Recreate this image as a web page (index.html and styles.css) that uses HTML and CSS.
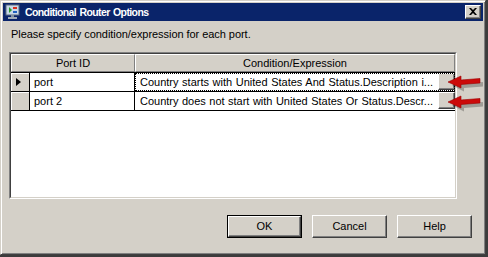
FILE: index.html
```html
<!DOCTYPE html>
<html>
<head>
<meta charset="utf-8">
<link rel="stylesheet" href="styles.css">
</head>
<body>
<div class="window">
  <div class="titlebar">
    <svg class="app-icon" width="16" height="16" viewBox="0 0 16 16">
      <rect x="1" y="1" width="13" height="10" fill="#c8d8e8" stroke="#5a6a80" stroke-width="1"/>
      <rect x="6" y="11" width="3" height="2" fill="#8090a0"/>
      <rect x="3" y="13" width="9" height="2" fill="#a0aab8"/>
      <path d="M4 3 L7 6 L4 9 Z" fill="#2a9a2a"/>
      <path d="M8 3 h4 v2 h-4 z" fill="#d83020"/>
      <path d="M8 7 h4 v2 h-4 z" fill="#2060c0"/>
    </svg>
    <span class="title-text">Conditional Router Options</span>
    <span class="close-btn">
      <svg width="8" height="7" viewBox="0 0 8 7"><path d="M0 0h2l2 2 2-2h2L5 3.5 8 7H6L4 5 2 7H0l3-3.5z" fill="#000"/></svg>
    </span>
  </div>
  <div class="content">
    <div class="prompt">Please specify condition/expression for each port.</div>
    <div class="grid">
      <div class="grid-inner">
        <div class="hrow">
          <div class="hcell hcell-id">Port ID</div>
          <div class="hcell hcell-cond">Condition/Expression</div>
        </div>
        <div class="row">
          <div class="indicator"><span class="tri"></span></div>
          <div class="cell cell-id">port</div>
          <div class="cell cell-cond focus">
            <span class="cond-text">Country starts with United States And Status.Description i...</span>
            <span class="ellipsis-btn"></span>
          </div>
        </div>
        <div class="row">
          <div class="indicator"></div>
          <div class="cell cell-id">port 2</div>
          <div class="cell cell-cond">
            <span class="cond-text">Country does not start with United States Or Status.Descr...</span>
            <span class="ellipsis-btn"></span>
          </div>
        </div>
      </div>
    </div>
    <div class="buttons">
      <span class="btn btn-default"><span class="btn-face">OK</span></span>
      <span class="btn"><span class="btn-face">Cancel</span></span>
      <span class="btn"><span class="btn-face">Help</span></span>
    </div>
  </div>
  <svg class="arrow arrow-1" width="40" height="18" viewBox="0 0 40 18">
    <path d="M3 9 L15 3 L15 7 L34 5.5 L34 10 L15 11.5 L15 15 Z" fill="#000" opacity="0.25" transform="translate(2,2.5)"/>
    <path d="M1 8 L14 2 L14 6 L33 4.5 L33 9 L14 10.5 L14 14 Z" fill="#cc0a0a" stroke="#9a0000" stroke-width="0.6"/>
  </svg>
  <svg class="arrow arrow-2" width="40" height="18" viewBox="0 0 40 18">
    <path d="M3 9 L15 3 L15 7 L34 5.5 L34 10 L15 11.5 L15 15 Z" fill="#000" opacity="0.25" transform="translate(2,2.5)"/>
    <path d="M1 8 L14 2 L14 6 L33 4.5 L33 9 L14 10.5 L14 14 Z" fill="#cc0a0a" stroke="#9a0000" stroke-width="0.6"/>
  </svg>
</div>
</body>
</html>
```
FILE: styles.css
```css
html, body {
  margin: 0;
  padding: 0;
}
body {
  width: 488px;
  height: 257px;
  background: #3c3c3c;
  font-family: "Liberation Sans", Arial, sans-serif;
  font-size: 11px;
  color: #000;
  overflow: hidden;
}
.window {
  position: relative;
  width: 486px;
  height: 255px;
  box-sizing: border-box;
  background: #d4d0c8;
  border: 1px solid;
  border-color: #d4d0c8 #404040 #404040 #d4d0c8;
  box-shadow: inset 1px 1px 0 #fff, inset -1px -1px 0 #808080;
  padding: 2px;
  display: flex;
  flex-direction: column;
}
.titlebar {
  height: 18px;
  background: #0a246a;
  display: flex;
  align-items: center;
  padding: 0 2px 0 2px;
  flex-shrink: 0;
}
.app-icon {
  display: block;
  margin-right: 4px;
}
.title-text {
  color: #fff;
  font-weight: bold;
  font-size: 10.5px;
  flex: 1;
  letter-spacing: -0.6px;
  word-spacing: 1px;
}
.close-btn {
  width: 16px;
  height: 14px;
  box-sizing: border-box;
  background: #d4d0c8;
  border: 1px solid;
  border-color: #fff #404040 #404040 #fff;
  box-shadow: inset -1px -1px 0 #808080;
  display: flex;
  align-items: center;
  justify-content: center;
  padding: 0 1px 1px 0;
}
.close-btn svg {
  display: block;
}
.content {
  flex: 1;
  display: flex;
  flex-direction: column;
  padding: 7px 9px 0 6px;
}
.prompt {
  padding-left: 2px;
  line-height: 13px;
  height: 13px;
  letter-spacing: -0.05px;
}
.grid {
  margin-top: 11px;
  width: 448px;
  height: 147px;
  box-sizing: border-box;
  border: 1px solid;
  border-color: #808080 #fff #fff #808080;
  background: #fff;
}
.grid-inner {
  height: 100%;
  box-sizing: border-box;
  border: 1px solid;
  border-color: #404040 #d4d0c8 #d4d0c8 #404040;
}
.hrow {
  display: flex;
  height: 19px;
  box-sizing: border-box;
  border-bottom: 1px solid #000;
  background: #d4d0c8;
}
.hcell {
  box-sizing: border-box;
  height: 18px;
  line-height: 16px;
  text-align: center;
  border: 1px solid;
  border-color: #fff #808080 #808080 #fff;
}
.hcell-id {
  width: 124px;
}
.hcell-cond {
  flex: 1;
}
.row {
  display: flex;
  height: 19px;
  box-sizing: border-box;
  border-bottom: 1px solid #000;
}
.indicator {
  width: 19px;
  box-sizing: border-box;
  background: #d4d0c8;
  border-right: 1px solid #000;
  box-shadow: inset 1px 1px 0 #fff;
  display: flex;
  align-items: center;
  justify-content: center;
}
.tri {
  width: 0;
  height: 0;
  border-top: 4.5px solid transparent;
  border-bottom: 4.5px solid transparent;
  border-left: 5px solid #000;
  margin-left: -3px;
}
.cell {
  box-sizing: border-box;
  line-height: 18px;
  white-space: nowrap;
}
.cell-id {
  width: 105px;
  border-right: 1px solid #000;
  padding-left: 4px;
}
.cell-cond {
  flex: 1;
  display: flex;
  align-items: stretch;
  padding-left: 5px;
  position: relative;
}
.cell-cond.focus {
  outline: 1px dotted #000;
  outline-offset: -1px;
}
.cond-text {
  display: block;
  width: 293px;
  text-align: justify;
  text-align-last: justify;
  overflow: hidden;
}
.ellipsis-btn {
  margin-left: auto;
  width: 17px;
  height: 17px;
  box-sizing: border-box;
  margin-top: 0;
  background: #d4d0c8;
  border: 1px solid;
  border-color: #fff #404040 #404040 #fff;
  box-shadow: inset -1px -1px 0 #808080;
}
.buttons {
  margin-top: 16px;
  display: flex;
  justify-content: flex-end;
  gap: 10px;
  padding-right: 2px;
}
.btn {
  width: 75px;
  height: 23px;
  box-sizing: border-box;
  background: #d4d0c8;
  border: 1px solid;
  border-color: #fff #404040 #404040 #fff;
  box-shadow: inset -1px -1px 0 #808080;
  display: flex;
}
.btn-face {
  flex: 1;
  display: flex;
  align-items: center;
  justify-content: center;
  padding-bottom: 1px;
}
.btn-default {
  border: 1px solid #000;
  box-shadow: none;
}
.btn-default .btn-face {
  border: 1px solid;
  border-color: #fff #404040 #404040 #fff;
  box-shadow: inset -1px -1px 0 #808080;
}
.arrow {
  position: absolute;
  display: block;
}
.arrow-1 {
  left: 446px;
  top: 73px;
}
.arrow-2 {
  left: 446px;
  top: 93px;
}
```
